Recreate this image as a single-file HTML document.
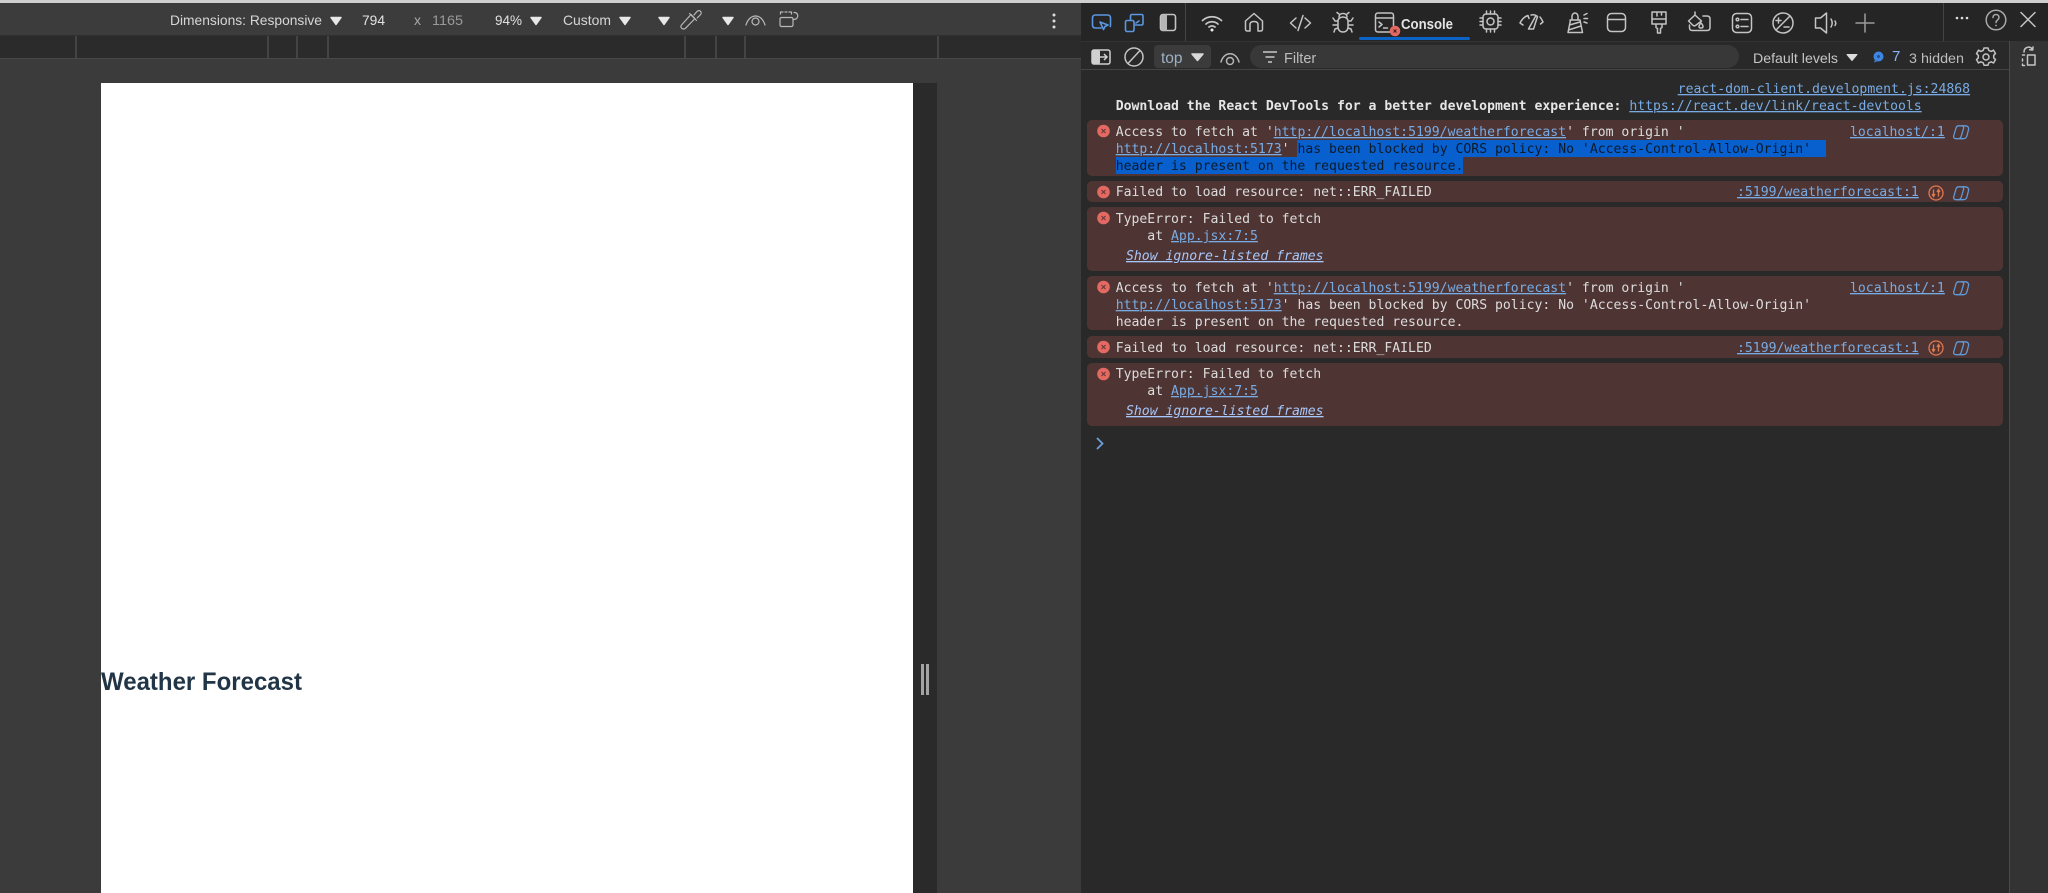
<!DOCTYPE html>
<html><head><meta charset="utf-8"><title>DevTools</title>
<style>
html,body{margin:0;padding:0;background:#292929;width:2048px;height:893px;overflow:hidden}
svg{display:block}
.ui{font-family:"Liberation Sans",sans-serif;font-size:14px;fill:#cfcfcf}
.m{font-family:"DejaVu Sans Mono","Liberation Mono",monospace;font-size:13.13px;fill:#dcdcdc}
.b{font-weight:bold;fill:#e6e6e6}
.l{fill:#78abe4;text-decoration:underline}
.g{fill:#a8c7fa;text-decoration:underline}
.s{fill:#0c1a2a}
.i{fill:none;stroke:#c4c4c4;stroke-width:1.5;stroke-linecap:round;stroke-linejoin:round}
.bl{fill:none;stroke:#5b97e0;stroke-width:1.6;stroke-linecap:round;stroke-linejoin:round}
</style></head><body>
<svg width="2048" height="893" viewBox="0 0 2048 893" xmlns="http://www.w3.org/2000/svg">
<defs>
<g id="err"><circle r="6.3" fill="#e46962"/><path d="M-2-2 2 2M2-2-2 2" stroke="#6b3a38" stroke-width="1.200"/></g>
<g id="copilot" fill="none" stroke="#5f9ad8" stroke-width="1.300" stroke-linejoin="round"><path d="M5.500.8h3c1.800 0 2.500 1.200 2 2.800L8.300 11c-.5 1.800-1.500 2.700-3.300 2.700H3C1 13.700.2 12.300.8 10.500L3 3C3.500 1.500 4.200.8 5.500.8Z"/><path d="M8.500.8H12c2.500 0 4 1.500 3.500 3.800l-1.500 6c-.5 2-2 3.100-4 3.100H5"/></g>
<path id="tri" d="M-5-3.500H5L0 3.500Z" fill="#e8e8e8" stroke="#e8e8e8" stroke-width="1.500" stroke-linejoin="round"/>
</defs>

<!-- left: viewport -->
<rect width="1081" height="893" fill="#3b3b3b"/>
<rect y="3" width="1081" height="32" fill="#3c3c3c"/>
<rect y="35" width="1081" height="1" fill="#303030"/>
<rect y="36" width="1081" height="22" fill="#2b2b2b"/>
<rect y="58" width="1081" height="1" fill="#494949"/>
<path d="M76 36v22M268 36v22M297 36v22M328 36v22M685 36v22M716 36v22M745 36v22M938 36v22" stroke="#5c5c5c" stroke-width="1"/>
<rect x="101" y="83" width="812" height="810" fill="#fff"/>
<rect x="913" y="83" width="24" height="810" fill="#2a2a2a"/>
<rect x="921" y="664" width="3" height="31" fill="#a3a3a3"/>
<rect x="926" y="664" width="3" height="31" fill="#a3a3a3"/>
<text x="101" y="690" font-family="'Liberation Sans',sans-serif" font-size="25" font-weight="bold" fill="#213547" textLength="201" lengthAdjust="spacingAndGlyphs">Weather Forecast</text>

<!-- left toolbar -->
<g class="ui">
<text x="170" y="25" textLength="152" lengthAdjust="spacingAndGlyphs" fill="#d6d6d6">Dimensions: Responsive</text>
<text x="362" y="25" textLength="23" lengthAdjust="spacingAndGlyphs" fill="#e2e2e2">794</text>
<text x="414" y="25" fill="#a8a8a8">x</text>
<text x="432" y="25" textLength="31" lengthAdjust="spacingAndGlyphs" fill="#9a9a9a">1165</text>
<text x="495" y="25" textLength="27" lengthAdjust="spacingAndGlyphs" fill="#e2e2e2">94%</text>
<text x="563" y="25" textLength="48" lengthAdjust="spacingAndGlyphs" fill="#d6d6d6">Custom</text>
</g>
<use href="#tri" x="336" y="21"/><use href="#tri" x="536" y="21"/><use href="#tri" x="625" y="21"/><use href="#tri" x="664" y="21"/><use href="#tri" x="728" y="21"/>
<g class="i" style="stroke-width:1.200;stroke:#b8b8b8">
<path d="M682 28.500c-1.500-1-1.500-2.500-.5-3.500L691 14.500l4 4-9.500 9.800c-1 .8-2.500.8-3.500.2Z"/>
<path d="M689.500 13.500l7 7M694 15l3-3.500c1-1.200 3-1.200 3.700 0 .8 1 .5 2.500-.5 3.500l-3 3"/>
<path d="M746 25c3.500-12 15.500-12 19 0"/><circle cx="755.500" cy="21.500" r="3.500"/>
<rect x="780" y="17.500" width="13" height="9" rx="1.500"/><path d="M781 12h2M785 12h2M789 12h2M780.500 12v2M791.500 12v2M794 12.500c4 0 5 4 2 6.500l-2 .5"/>
</g>
<circle cx="1054" cy="15" r="1.500" fill="#ddd"/><circle cx="1054" cy="21" r="1.500" fill="#ddd"/><circle cx="1054" cy="27" r="1.500" fill="#ddd"/>
<rect width="2048" height="3" fill="#cfcfcf"/>

<!-- devtools -->
<rect x="1081" y="3" width="967" height="890" fill="#292929"/>
<rect x="1081" y="3" width="967" height="38" fill="#252525"/>
<rect x="1081" y="41" width="967" height="1" fill="#333"/>
<rect x="1081" y="69" width="928" height="1" fill="#444"/>
<rect x="2009" y="41" width="39" height="852" fill="#333"/>
<rect x="2009" y="41" width="1" height="852" fill="#4a4a4a"/>
<path d="M1185.500 3v38M1943.500 3v38" stroke="#444"/>

<!-- row 1 icons -->
<g class="bl">
<path d="M1101 28h-5.500c-2 0-3-1-3-3v-7c0-2 1-3 3-3h12c2 0 3 1 3 3v7c0 .5 0 1-.2 1.500"/><path d="M1100 22l8 3-3 1.500-1.500 3Z"/>
<path d="M1130.500 20v-4c0-1 .5-1.500 1.500-1.500h9.500c1 0 1.500.5 1.500 1.500v7.500c0 1-.5 1.500-1.500 1.500h-6M1136 23l3-2"/>
<rect x="1125.500" y="20.500" width="8.500" height="11" rx="1.500"/>
</g>
<rect x="1160.500" y="14.500" width="15" height="16" rx="2.500" fill="none" stroke="#c4c4c4" stroke-width="1.6"/>
<path d="M1161 17c0-1.500.5-2.500 2-2.500h4v16h-4c-1.500 0-2-1-2-2.500Z" fill="#b5b5b5"/>
<g class="i" stroke="#d8d8d8">
<path d="M1202.500 20.500c5.500-5 13.500-5 19 0" stroke-width="1.800"/><path d="M1206 24c3.500-3 8.500-3 12 0" stroke-width="1.800"/><path d="M1209 27c2-1.500 4-1.500 6 0" stroke-width="1.800"/>
</g>
<circle cx="1212" cy="30" r="1.500" fill="#eee"/>
<g class="i">
<path d="M1245.500 21 1254 13.500l8.500 7.500v8c0 1.500-.5 2-2 2h-2.500v-6.500c0-2-1.500-3-4-3s-4 1-4 3V31h-2.500c-1.500 0-2-.5-2-2Z"/>
<path d="M1296 18l-5.500 5 5.500 5M1305 18l5.500 5-5.500 5M1303 15.500l-5 15"/>
<path d="M1338 21c0-2 2-4 5-4s5 2 5 4v6c0 3-2 5-5 5s-5-2-5-5ZM1339 17c0-2 1.500-3.500 4-3.500s4 1.500 4 3.500M1338 21h-3l-2-3M1348 21h3l2-3M1338 25h-5M1348 25h5M1338 28l-3 1-1 3M1348 28l3 1 1 3M1339 14l-2-1.500M1347 14l2-1.500"/>
<path d="M1390 32h-12c-1.500 0-2.500-1-2.500-2.500v-14c0-1.500 1-2.500 2.500-2.500h13c1.500 0 2.500 1 2.500 2.500v10M1375.500 18h18M1379 22l3 2.500-3 2.500M1383.500 28h4"/>
</g>
<circle cx="1395" cy="31" r="5.300" fill="#e46962"/><path d="M1393.500 29.500l3 3M1396.500 29.500l-3 3" stroke="#40201f" stroke-width="1"/>
<text x="1401" y="29" font-family="'Liberation Sans',sans-serif" font-size="14.500" font-weight="bold" fill="#e4e4e4" textLength="52" lengthAdjust="spacingAndGlyphs">Console</text>
<rect x="1359" y="37" width="111" height="3" rx="1.500" fill="#0b63c5"/>
<g class="i">
<rect x="1483" y="14" width="15" height="15" rx="3"/><circle cx="1490.500" cy="21.500" r="3.500"/>
<path d="M1480 18h3M1480 21.500h3M1480 25h3M1498 18h3M1498 21.500h3M1498 25h3M1486.500 11v3M1490.500 11v3M1494.500 11v3M1486.500 29v3M1490.500 29v3M1494.500 29v3"/>
<path d="M1523 25l-3-2c2-4 4.500-6.500 8-7.500l1 3M1531 15c1.500-.3 3-.2 4 0M1540 17c1 1 2 3 3 5l-2.500 2"/>
<path d="M1528.500 29l7.500-13.500 1.500 1-4 12.500Z"/>
<path d="M1572 20v-3.500c0-1.500 1-3.500 3-3.500s3 2 3 3.500V20M1570 20h10M1570.500 20 1568 32.500h14.500L1580 20M1569.500 25l10.500-3M1568.500 30l12.500-4M1584 15l3-1.500M1584 18.500h3.500M1584 22l3 1"/>
<rect x="1607.500" y="13.500" width="18" height="18" rx="4"/><path d="M1608 19.500h17"/>
<path d="M1652 12h14v12h-14ZM1652 19h14M1657 12v4M1661.500 12v3M1656 24v3.500l1.500 1v4.500h3v-4.500l1.500-1V24"/>
<path d="M1703 16h4c2 0 3 1 3 3v8.500c0 2-1 3-3 3h-14.500c-2 0-3-1-3-3V25M1688.500 21l6.500-6 6.500 6-6 4.500c-.8.500-1.500.5-2.300 0ZM1695 15v-3"/><path d="M1701 23c1.500 1.500 2 2.500 2 3.500s-1 1.500-2 1.500-2-.5-2-1.500.5-2 2-3.500Z"/>
<rect x="1732.500" y="13.500" width="19" height="19" rx="4"/><path d="M1741 19.500h7M1741 26.500h7"/><circle cx="1737.500" cy="19.500" r="1.300"/><circle cx="1737.500" cy="26.500" r="1.300"/>
<circle cx="1783" cy="23" r="10"/><path d="M1776 30l14-14M1776 20.500h5M1778.500 18v5M1784 27h5"/>
<path d="M1815.500 18h5l6-5v20l-6-5h-5ZM1831 19c1.500 2.500 1.500 5.500 0 8M1835 21c1 1.500 1 3 0 4.500"/>
<path d="M1865 14v18M1856 23h18" stroke="#9b9b9b"/>
<circle cx="1996" cy="20" r="9.800" style="stroke:#a8a8a8"/><path d="M1993 17.500c0-1.800 1.300-3 3-3s3 1.200 3 3c0 2.500-3 2.500-3 5" style="stroke:#a8a8a8"/>
<path d="M2021 12.500l14 14M2035 12.500l-14 14"/>
</g>
<circle cx="1996" cy="25.500" r=".9" fill="#a8a8a8"/>
<circle cx="1957" cy="18" r="1.300" fill="#ddd"/><circle cx="1962" cy="18" r="1.300" fill="#ddd"/><circle cx="1967" cy="18" r="1.300" fill="#ddd"/>

<!-- row 2 -->
<rect x="1092" y="50" width="18" height="14" rx="2" fill="none" stroke="#d0d0d0" stroke-width="1.500"/>
<rect x="1092" y="50" width="8" height="14" rx="2" fill="#d0d0d0"/>
<path d="M1100 57h7M1104 54l3 3-3 3" fill="none" stroke="#d0d0d0" stroke-width="1.500"/>
<g class="i"><circle cx="1134" cy="57" r="9"/><path d="M1128 63.500l12-13"/></g>
<rect x="1154" y="45" width="57" height="23" rx="4" fill="#3b3b3b"/>
<text x="1161" y="63" class="ui" style="font-size:15.500px;fill:#9fb0c4">top</text>
<path d="M1192 54h11l-5.500 6.500Z" fill="#d8d8d8" stroke="#d8d8d8" stroke-width="1.500" stroke-linejoin="round"/>
<g class="i" style="stroke:#b5b5b5"><path d="M1221 62c3-11 15-11 18 0"/><circle cx="1230" cy="61" r="3.500"/></g>
<rect x="1250" y="45" width="489" height="23" rx="11.500" fill="#383838"/>
<path d="M1263 52h14M1265.500 57h9M1268 62h4" stroke="#c8c8c8" stroke-width="1.500"/>
<text x="1284" y="63" class="ui" style="font-size:14.500px;fill:#bdbdbd">Filter</text>
<text x="1753" y="63" class="ui" textLength="85" lengthAdjust="spacingAndGlyphs" style="fill:#c6c6c6">Default levels</text>
<path d="M1847 54.500h10l-5 6Z" fill="#dcdcdc" stroke="#dcdcdc" stroke-linejoin="round"/>
<circle cx="1878.500" cy="56.500" r="5" fill="#3f86e0"/><path d="M1875 60l-1 2.500 3-1Z" fill="#3f86e0"/><circle cx="1878.500" cy="56.500" r="1.500" fill="#1f4f91"/>
<text x="1892" y="61" class="ui" style="fill:#8ab4f8;font-size:15px">7</text>
<text x="1909" y="63" class="ui" textLength="55" lengthAdjust="spacingAndGlyphs" style="fill:#bdbdbd">3 hidden</text>
<g class="i"><circle cx="1986" cy="57" r="3"/><path d="M1984 48h4l.8 2.400 2.400 1 2.300-1.200 2 3.400-1.800 1.700v2.600l1.800 1.700-2 3.400-2.300-1.200-2.400 1-.8 2.400h-4l-.8-2.400-2.400-1-2.300 1.200-2-3.400 1.800-1.700v-2.600l-1.800-1.700 2-3.400 2.300 1.200 2.400-1Z"/>
<path d="M2024 52c0-5 6-6.500 8.500-2.500M2033 47l-.3 3-3-.3M2027.500 55h7.500v10h-7.500ZM2022.500 55h2M2022.500 59v2M2022.500 64v1.500h2"/></g>

<!-- console rows -->
<g fill="#4e3534">
<rect x="1087" y="120" width="916" height="56" rx="5"/>
<rect x="1087" y="181" width="916" height="21" rx="5"/>
<rect x="1087" y="207" width="916" height="64" rx="5"/>
<rect x="1087" y="276" width="916" height="54" rx="5"/>
<rect x="1087" y="336" width="916" height="22" rx="5"/>
<rect x="1087" y="363" width="916" height="63" rx="5"/>
</g>
<rect x="1297" y="140" width="529" height="17" fill="#0860cf"/>
<rect x="1116" y="157" width="347" height="17" fill="#0860cf"/>

<g class="m">
<text x="1677.700" y="93" class="m l">react-dom-client.development.js:24868</text>
<text x="1115.700" y="110" class="m b">Download the React DevTools for a better development experience: <tspan class="l" font-weight="normal">https://react.dev/link/react-devtools</tspan></text>

<text x="1115.700" y="136" xml:space="preserve">Access to fetch at '<tspan class="l">http://localhost:5199/weatherforecast</tspan>' from origin '</text>
<text x="1115.700" y="153" xml:space="preserve"><tspan class="l">http://localhost:5173</tspan>' <tspan class="s">has been blocked by CORS policy: No 'Access-Control-Allow-Origin'</tspan></text>
<text x="1115.700" y="170" class="m s" style="fill:#0c1a2a">header is present on the requested resource.</text>
<text x="1850" y="136" class="m l">localhost/:1</text>

<text x="1115.700" y="196">Failed to load resource: net::ERR_FAILED</text>
<text x="1737" y="196" class="m l">:5199/weatherforecast:1</text>

<text x="1115.700" y="223">TypeError: Failed to fetch</text>
<text x="1147.300" y="240">at <tspan class="l">App.jsx:7:5</tspan></text>
<text x="1126" y="260" class="m g" font-style="italic">Show ignore-listed frames</text>

<text x="1115.700" y="292" xml:space="preserve">Access to fetch at '<tspan class="l">http://localhost:5199/weatherforecast</tspan>' from origin '</text>
<text x="1115.700" y="309" xml:space="preserve"><tspan class="l">http://localhost:5173</tspan>' has been blocked by CORS policy: No 'Access-Control-Allow-Origin'</text>
<text x="1115.700" y="326">header is present on the requested resource.</text>
<text x="1850" y="292" class="m l">localhost/:1</text>

<text x="1115.700" y="352">Failed to load resource: net::ERR_FAILED</text>
<text x="1737" y="352" class="m l">:5199/weatherforecast:1</text>

<text x="1115.700" y="378">TypeError: Failed to fetch</text>
<text x="1147.300" y="395">at <tspan class="l">App.jsx:7:5</tspan></text>
<text x="1126" y="415" class="m g" font-style="italic">Show ignore-listed frames</text>
</g>

<use href="#err" x="1103.500" y="131"/><use href="#err" x="1103.500" y="192"/><use href="#err" x="1103.500" y="218"/>
<use href="#err" x="1103.500" y="287"/><use href="#err" x="1103.500" y="347"/><use href="#err" x="1103.500" y="374"/>
<use href="#copilot" x="1953" y="125"/><use href="#copilot" x="1953" y="186"/>
<use href="#copilot" x="1953" y="281"/><use href="#copilot" x="1953" y="341"/>
<g fill="none" stroke="#e0784f" stroke-width="1.300">
<circle cx="1936" cy="193" r="7"/><path d="M1933.500 189.500v7M1938.500 196.500v-7M1932 194l1.500 2.500 1.500-2.500M1937 192l1.500-2.500 1.500 2.500"/>
<circle cx="1936" cy="348" r="7"/><path d="M1933.500 344.500v7M1938.500 351.500v-7M1932 349l1.500 2.500 1.500-2.500M1937 347l1.500-2.500 1.500 2.500"/>
</g>
<path d="M1097 438l5.500 5.500-5.500 5.500" fill="none" stroke="#6c9fdc" stroke-width="1.800"/>
</svg>
</body></html>
